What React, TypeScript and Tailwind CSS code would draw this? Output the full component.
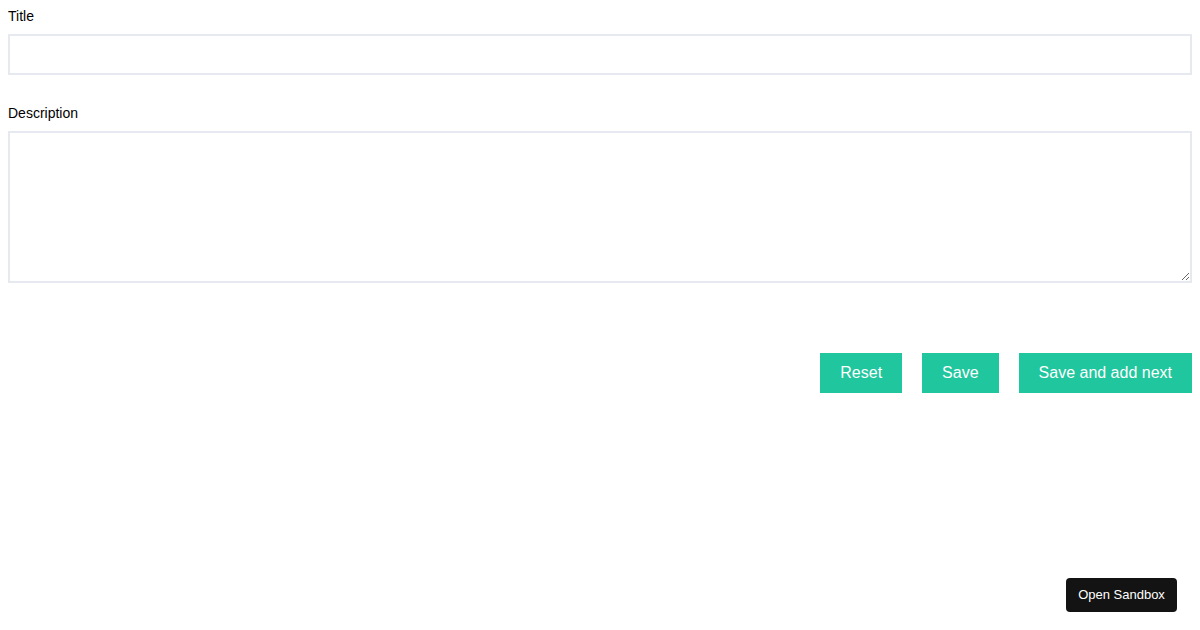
import React from "react";

export default function App() {
  return (
    <div className="relative w-[1200px] h-[630px] bg-white p-2 font-['Liberation_Sans',Arial,sans-serif] text-black">
      <div className="flex flex-col">
        <label className="text-[14px] leading-[16px]">Title</label>
        <input
          type="text"
          className="mt-[10px] h-[41px] w-full border-2 border-[#e6e9f0] outline-none px-2"
        />
        <label className="text-[14px] leading-[16px] mt-[30px]">Description</label>
        <textarea className="mt-[10px] h-[152px] w-full border-2 border-[#e6e9f0] outline-none p-2 resize-y" />
        <div className="mt-[70px] flex justify-end gap-5">
          <button className="h-10 px-5 bg-[#20c69d] text-white text-[16px]">Reset</button>
          <button className="h-10 px-5 bg-[#20c69d] text-white text-[16px]">Save</button>
          <button className="h-10 px-5 bg-[#20c69d] text-white text-[16px]">Save and add next</button>
        </div>
      </div>
      <button className="absolute left-[1066px] top-[578px] w-[111px] h-[34px] rounded-[4px] bg-[#131313] text-white text-[13px]">
        Open Sandbox
      </button>
    </div>
  );
}
